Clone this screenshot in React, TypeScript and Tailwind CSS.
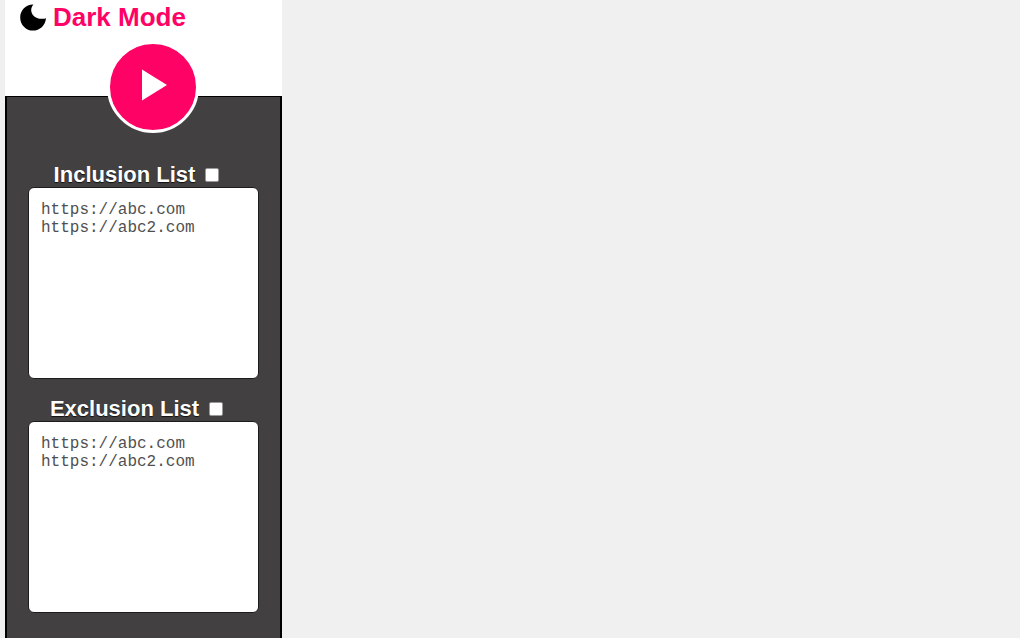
import React from 'react';

const MoonIcon = () => (
  <svg viewBox="0 0 26 27" className="h-[27px] w-[26px] shrink-0" fill="#000" aria-hidden="true">
    <path d="M13.4 0.6C6 0.4 0.2 6.4 0.2 13.4C0.2 20.8 6 26.6 13 26.6C19.8 26.6 25.4 21.4 26 14.2C24.6 14.8 23 14.9 21.4 14.8C20 15 17.8 14.6 16 13.6C12.4 11.6 10.6 7.8 11.4 4.2C11.8 2.8 12.4 1.6 13.4 0.6Z" />
  </svg>
);

type UrlListProps = {
  id: string;
  title: string;
};

const UrlList = ({ id, title }: UrlListProps) => {
  return (
    <section className="flex flex-col">
      <div className="flex h-6 items-center justify-center pr-3.5">
        <label
          htmlFor={`${id}-enabled`}
          className="text-[22px] leading-6 font-bold text-white [text-shadow:0_1px_1px_#111]"
        >
          {title}
        </label>
        <input
          id={`${id}-enabled`}
          type="checkbox"
          className="ml-2.5 size-3.5 appearance-none rounded-xs border border-[#999] bg-white checked:bg-[#ff0266]"
        />
      </div>
      <textarea
        aria-label={`${title} URLs`}
        defaultValue={'https://abc.com\nhttps://abc2.com'}
        spellCheck={false}
        className="block h-48 w-full resize-none rounded-md border border-[#1c1c1c] bg-white px-3 py-[13px] font-['Liberation_Mono',monospace] text-base leading-[18px] text-[#505050] outline-none"
      />
    </section>
  );
};

const App = () => {
  return (
    <div className="min-h-screen bg-[#f0f0f0] pl-[5px] font-['Liberation_Sans',sans-serif]">
      <main className="flex min-h-screen w-[277px] flex-col bg-white">
        <header className="flex h-24 flex-col">
          <div className="flex items-center gap-[7px] pt-[3px] pl-[15px]">
            <MoonIcon />
            <h1 className="text-[26px] leading-7 font-bold text-[#ff0266]">Dark Mode</h1>
          </div>
        </header>

        <div className="flex grow flex-col border-2 border-t border-b-0 border-black bg-[#434041] px-[21px] pb-6">
          <button
            type="button"
            aria-label="Start dark mode"
            className="-mt-14 ml-[79px] flex size-[92px] items-center justify-center rounded-full border-3 border-white bg-[#ff0266]"
          >
            <svg viewBox="0 0 25 32" className="mb-1 ml-0.5 h-8 w-[25px]" fill="#fff" aria-hidden="true">
              <path d="M0 0.5L25 16L0 31.5Z" />
            </svg>
          </button>

          <div className="mt-[30px] flex flex-col gap-[18px]">
            <UrlList id="inclusion" title="Inclusion List" />
            <UrlList id="exclusion" title="Exclusion List" />
          </div>
        </div>
      </main>
    </div>
  );
};

export default App;
